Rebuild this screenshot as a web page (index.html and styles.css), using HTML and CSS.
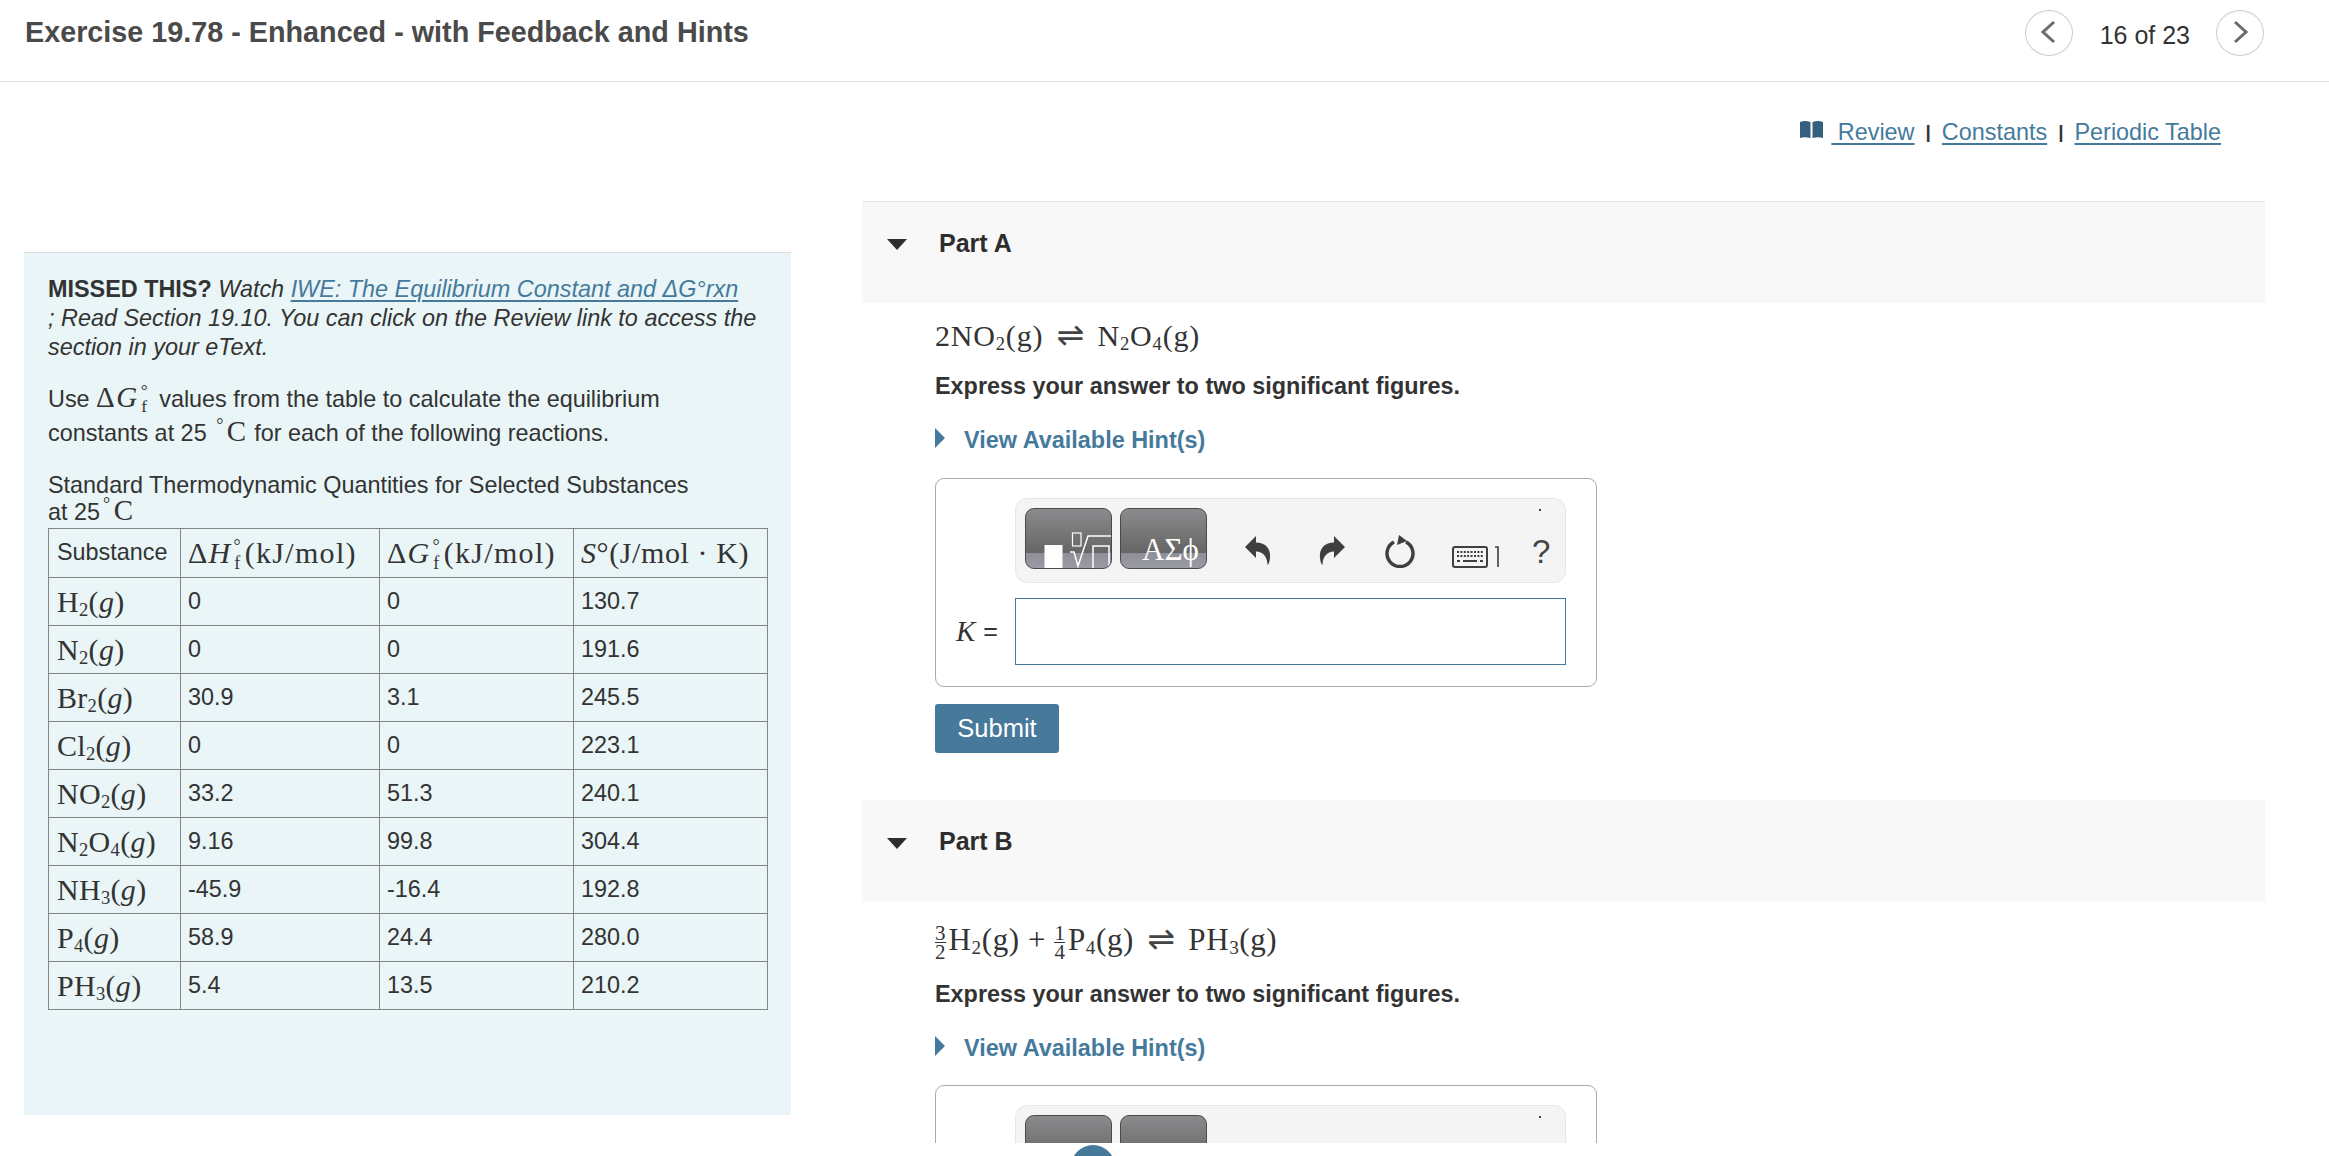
FILE: index.html
```html
<!DOCTYPE html>
<html lang="en">
<head>
<meta charset="utf-8">
<title>Exercise 19.78</title>
<link rel="stylesheet" href="styles.css">
</head>
<body>
<header class="top">
  <h1 class="title">Exercise 19.78 - Enhanced - with Feedback and Hints</h1>
  <nav class="pager">
    <span class="round"><svg width="48" height="46" viewBox="0 0 48 46"><path d="M29 12 L18 22 L29 32" fill="none" stroke="#6b6b6b" stroke-width="3"/></svg></span>
    <span class="count">16 of 23</span>
    <span class="round"><svg width="48" height="46" viewBox="0 0 48 46"><path d="M19 12 L30 22 L19 32" fill="none" stroke="#6b6b6b" stroke-width="3"/></svg></span>
  </nav>
</header>
<main class="main">
  <section class="left">
    <div class="panel">
      <p class="intro"><b>MISSED THIS?</b> <i>Watch <a href="#">IWE: The Equilibrium Constant and ΔG°rxn</a><br>; Read Section 19.10. You can click on the Review link to access the<br>section in your eText.</i></p>
      <p class="use">Use <span class="m big">Δ<i>G</i><span class="ss"><span>°</span><span>f</span></span></span> values from the table to calculate the equilibrium<br>constants at 25 <span class="m big"><span class="deg">°</span>C</span> for each of the following reactions.</p>
      <p class="cap">Standard Thermodynamic Quantities for Selected Substances<br>at 25<span class="m big"><span class="deg">°</span>C</span></p>
      <table class="data">
        <colgroup><col class="c1"><col class="c2"><col class="c3"><col class="c4"></colgroup>
        <tr class="head"><td>Substance</td><td><span class="m">Δ<i>H</i><span class="ss"><span>°</span><span>f</span></span>(kJ/mol)</span></td><td><span class="m">Δ<i>G</i><span class="ss"><span>°</span><span>f</span></span>(kJ/mol)</span></td><td><span class="m"><i>S</i>°(J/mol · K)</span></td></tr>
        <tr><td><span class="m">H<sub>2</sub>(<i>g</i>)</span></td><td>0</td><td>0</td><td>130.7</td></tr>
        <tr><td><span class="m">N<sub>2</sub>(<i>g</i>)</span></td><td>0</td><td>0</td><td>191.6</td></tr>
        <tr><td><span class="m">Br<sub>2</sub>(<i>g</i>)</span></td><td>30.9</td><td>3.1</td><td>245.5</td></tr>
        <tr><td><span class="m">Cl<sub>2</sub>(<i>g</i>)</span></td><td>0</td><td>0</td><td>223.1</td></tr>
        <tr><td><span class="m">NO<sub>2</sub>(<i>g</i>)</span></td><td>33.2</td><td>51.3</td><td>240.1</td></tr>
        <tr><td><span class="m">N<sub>2</sub>O<sub>4</sub>(<i>g</i>)</span></td><td>9.16</td><td>99.8</td><td>304.4</td></tr>
        <tr><td><span class="m">NH<sub>3</sub>(<i>g</i>)</span></td><td>-45.9</td><td>-16.4</td><td>192.8</td></tr>
        <tr><td><span class="m">P<sub>4</sub>(<i>g</i>)</span></td><td>58.9</td><td>24.4</td><td>280.0</td></tr>
        <tr><td><span class="m">PH<sub>3</sub>(<i>g</i>)</span></td><td>5.4</td><td>13.5</td><td>210.2</td></tr>
      </table>
    </div>
  </section>
  <section class="right">
    <div class="links">
      <svg class="book" width="23" height="18" viewBox="0 0 23 18"><path d="M0 1 Q5 -1 10.5 1 V17 Q5 15.5 0 17 Z M12.5 1 Q18 -1 23 1 V17 Q18 15.5 12.5 17 Z" fill="#35607d"/></svg>
      <a class="first" href="#">&nbsp;Review</a><span class="sep">|</span><a href="#">Constants</a><span class="sep">|</span><a href="#">Periodic Table</a>
    </div>

    <div class="band"><span class="tri-down"></span><span class="part">Part A</span></div>
    <div class="body">
      <div class="eq">2NO<sub>2</sub>(g) <span class="arrow">⇌</span> N<sub>2</sub>O<sub>4</sub>(g)</div>
      <p class="express">Express your answer to two significant figures.</p>
      <p class="hint"><span class="tri-right"></span>View Available Hint(s)</p>
      <div class="box">
        <div class="toolbar">
          <span class="speck"></span>
          <span class="tool">
            <svg width="87" height="61" viewBox="0 0 87 61"><rect x="19.5" y="37" width="18" height="24" fill="#fff"/><rect x="47.5" y="25" width="8.5" height="13" fill="none" stroke="#fff" stroke-width="1.2"/><path d="M45 44 H49 L53 58 L63 28 H87" fill="none" stroke="#fff" stroke-width="1.5"/><path d="M68 61 V38 H84 V61" fill="none" stroke="#fff" stroke-width="1.5"/></svg>
          </span>
          <span class="tool second">
            <svg width="87" height="61" viewBox="0 0 87 61"><text x="22" y="52" class="greek">ΑΣϕ</text></svg>
          </span>
          <svg class="ic undo" width="26" height="30" viewBox="0 0 26 30"><path d="M0 11 L11 0 V6.5 C21 6.5 26 13 25 22 C24.7 25 24 28 22.5 29 C22.5 22 19 15.5 11 15.5 V22 Z" fill="#3f3f3f"/></svg>
          <svg class="ic redo" width="26" height="30" viewBox="0 0 26 30"><path transform="matrix(-1 0 0 1 26 0)" d="M0 11 L11 0 V6.5 C21 6.5 26 13 25 22 C24.7 25 24 28 22.5 29 C22.5 22 19 15.5 11 15.5 V22 Z" fill="#3f3f3f"/></svg>
          <svg class="ic reset" width="30" height="33" viewBox="0 0 30 33"><path d="M9 7 A13 13 0 1 0 21 7" fill="none" stroke="#3f3f3f" stroke-width="3.4"/><path d="M14 0 L22 6 L12 10 Z" fill="#3f3f3f"/></svg>
          <svg class="ic kbd" width="36" height="22" viewBox="0 0 36 22"><rect x="1" y="1" width="34" height="20" rx="2" fill="#f4f4f4" stroke="#3f3f3f" stroke-width="2"/><path d="M5 6 H31 M5 10 H31" stroke="#3f3f3f" stroke-width="2" stroke-dasharray="2 1.4"/><path d="M5 15 H8 M11 15 H25 M28 15 H31" stroke="#3f3f3f" stroke-width="2"/></svg>
          <svg class="ic brk" width="4" height="21" viewBox="0 0 4 21"><path d="M0 1 H3 V21" fill="none" stroke="#3f3f3f" stroke-width="1.6"/></svg>
          <span class="help">?</span>
        </div>
        <div class="answer">
          <span class="lab"><i>K</i><span class="eqs">=</span></span>
          <span class="input"></span>
        </div>
      </div>
      <span class="submit">Submit</span>
    </div>

    <div class="band band-b"><span class="tri-down"></span><span class="part">Part B</span></div>
    <div class="body">
      <div class="eq eq-b"><span class="frac"><span>3</span><span>2</span></span>H<sub>2</sub>(g) + <span class="frac"><span>1</span><span>4</span></span>P<sub>4</sub>(g) <span class="arrow">⇌</span> PH<sub>3</sub>(g)</div>
      <p class="express">Express your answer to two significant figures.</p>
      <p class="hint"><span class="tri-right"></span>View Available Hint(s)</p>
      <div class="box box-b">
        <div class="toolbar">
          <span class="speck"></span>
          <span class="tool"></span>
          <span class="tool second"></span>
        </div>
      </div>
    </div>
  </section>
</main>
<div class="foot"><span class="fab"></span></div>
</body>
</html>
```
FILE: styles.css
```css
* { box-sizing: border-box; }
html, body { margin: 0; padding: 0; }
body {
  width: 2329px;
  height: 1156px;
  overflow: hidden;
  position: relative;
  background: #fff;
  font-family: "Liberation Sans", Arial, sans-serif;
  color: #333;
  font-size: 23.4px;
}
p { margin: 0; }
a { color: #457a9c; text-decoration: underline; text-decoration-thickness: 1.5px; text-underline-offset: 3px; }

.top {
  height: 82px;
  display: flex;
  align-items: flex-start;
  justify-content: space-between;
  border-bottom: 1.5px solid #e2e2e2;
  padding: 0 65px 0 25px;
}
.title {
  margin: 14px 0 0;
  font-size: 28.75px;
  line-height: 36px;
  font-weight: bold;
  color: #4a4a4a;
}
.pager { display: flex; align-items: center; margin-top: 10px; height: 46px; }
.round {
  width: 48px;
  height: 46px;
  border: 1.5px solid #ccc;
  border-radius: 50%;
  display: flex;
  align-items: center;
  justify-content: center;
}
.round svg { flex: none; }
.count { font-size: 25px; margin: 4px 26px 0 27px; color: #333; }

.main { display: flex; height: 1061px; overflow: hidden; }
.left { width: 816px; flex: none; padding: 170px 0 0 24px; }
.panel {
  width: 767px;
  height: 863px;
  background: #e9f5f6;
  border-top: 1.5px solid #dcdcdc;
  padding: 22px 24px 0 24px;
}
.intro { line-height: 29px; color: #333; }
.intro b { color: #333; }
.use { margin-top: 21px; line-height: 33.5px; }
.cap { margin-top: 22px; line-height: 27px; }

.m { font-family: "Liberation Serif", "DejaVu Serif", serif; font-size: 30px; color: #333; white-space: nowrap; line-height: 1; letter-spacing: 0.3px; }
.big { font-size: 29px; line-height: 0; letter-spacing: 1.5px; }
.m i { font-style: italic; }
.m sub, .eq sub { font-size: 62%; vertical-align: baseline; position: relative; top: 0.22em; line-height: 0; }
.deg { font-size: 62%; line-height: 0; vertical-align: baseline; position: relative; top: -0.55em; margin: 0 2px 0 3px; }
.ss { display: inline-flex; flex-direction: column; vertical-align: middle; font-size: 60%; line-height: 1; margin: -10px 4px -10px 2px; text-align: center; font-style: normal; letter-spacing: 0; }
.ss span { height: 1.05em; }
.ss span:last-child { position: relative; top: -2px; }
.big .ss { margin-right: 5px; }

.data { border-collapse: collapse; table-layout: fixed; width: 719px; margin-top: 2px; }
.c1 { width: 132px; }
.c2 { width: 199px; }
.c3 { width: 194px; }
.c4 { width: 194px; }
.data td { border: 1.5px solid #868686; height: 48px; padding: 0 7px; font-size: 23.4px; line-height: 1; color: #333; white-space: nowrap; }
.data .head td { height: 49px; }
.data .head .m { letter-spacing: 1.3px; }
.data .head td:last-child .m { letter-spacing: 0.6px; }
.data td:nth-child(1) { padding-left: 8px; padding-right: 0; }

.right { flex: 1; padding-left: 46px; padding-right: 64px; min-width: 0; }
.links {
  height: 119px;
  display: flex;
  align-items: flex-start;
  padding: 35px 44px 0 0;
  justify-content: flex-end;
  font-size: 23.4px;
  line-height: 30px;
}
.book { margin: 4px 8px 0 0; flex: none; }
.sep { margin: 0 11px; color: #333; font-size: 19px; font-weight: bold; }

.band {
  height: 102px;
  background: #f8f8f8;
  border-top: 1.5px solid #e4e4e4;
  padding: 25px 0 0 25px;
  display: flex;
  align-items: flex-start;
}
.band-b { margin-top: 47px; border-top-color: #f8f8f8; padding-top: 24px; }
.tri-down {
  width: 0; height: 0;
  border-left: 10px solid transparent;
  border-right: 10px solid transparent;
  border-top: 11px solid #2d2d2d;
  margin-top: 12px;
}
.band-b .tri-down { margin-top: 13px; }
.part { margin-left: 32px; font-size: 25px; font-weight: bold; line-height: 32px; color: #2d2d2d; }

.body { padding-left: 73px; }
.eq { margin-top: 13px; height: 41px; line-height: 40px; font-family: "Liberation Serif", "DejaVu Serif", serif; font-size: 30px; letter-spacing: 0.8px; color: #333; white-space: nowrap; }
.arrow { font-family: "DejaVu Sans", sans-serif; font-size: 33px; line-height: 0; margin: 0 5px; color: #444; letter-spacing: 0; }
.eq-b { margin-top: 14px; height: 49px; line-height: 48px; font-size: 31px; letter-spacing: 0.6px; }
.frac { display: inline-flex; flex-direction: column; vertical-align: middle; font-size: 21px; line-height: 18px; text-align: center; margin: -6px 3px -6px 0; letter-spacing: 0; }
.frac span:first-child { border-bottom: 1.5px solid #333; }

.express { margin-top: 14px; font-size: 23.4px; font-weight: bold; line-height: 30px; color: #333; }
.hint { margin-top: 24px; font-size: 23.45px; font-weight: bold; line-height: 30px; color: #457a9c; display: flex; align-items: center; }
.tri-right {
  width: 0; height: 0;
  border-top: 10px solid transparent;
  border-bottom: 10px solid transparent;
  border-left: 10px solid #457a9c;
  margin-right: 19px;
  margin-top: -4px;
}

.box {
  margin-top: 23px;
  width: 662px;
  height: 209px;
  border: 1.5px solid #aaa;
  border-radius: 9px;
  padding: 19px 28px 0 79px;
}
.toolbar {
  position: relative;
  width: 551px;
  height: 85px;
  background: #f4f4f4;
  border: 1.5px solid #e6e6e6;
  border-radius: 12px;
  display: flex;
  align-items: flex-start;
  padding: 9px 0 0 9px;
}
.speck { position: absolute; left: 523px; top: 10px; width: 2px; height: 2px; background: #444; }
.tool {
  width: 87px;
  height: 61px;
  flex: none;
  border-radius: 9px;
  border: 1px solid #4a4a4a;
  background: linear-gradient(#8b8b8e 0, #656565 75%, #8f8f98 75%, #9a9aa3 100%);
  overflow: hidden;
}
.tool svg { display: block; margin: -1px; }
.tool.second { margin-left: 8px; }
.greek { font-family: "Liberation Serif", serif; font-size: 31px; fill: #fff; }
.ic { flex: none; }
.undo { margin: 28px 0 0 38px; }
.redo { margin: 28px 0 0 48px; }
.reset { margin: 27px 0 0 40px; }
.kbd { margin: 38px 0 0 37px; }
.brk { margin: 38px 0 0 7px; }
.help { margin: 26px 0 0 33px; font-size: 33px; line-height: 36px; color: #444; }

.answer { display: flex; align-items: center; margin-top: 15px; margin-left: -79px; }
.lab { width: 79px; padding-left: 20px; font-family: "Liberation Serif", serif; font-size: 29px; display: flex; align-items: center; color: #333; }
.eqs { font-family: "Liberation Sans", sans-serif; font-size: 25px; margin-left: 8px; }
.input { width: 551px; height: 67px; border: 1.5px solid #457a9c; background: #fff; }

.submit {
  display: block;
  margin-top: 17px;
  width: 124px;
  height: 49px;
  background: #47799b;
  border-radius: 3px;
  color: #fff;
  font-size: 25.5px;
  line-height: 49px;
  text-align: center;
}
.box-b { height: 120px; margin-top: 22px; }

.foot { height: 13px; position: relative; }
.fab { position: absolute; left: 1071px; top: 2px; width: 44px; height: 44px; border-radius: 50%; background: #47799b; }
```
